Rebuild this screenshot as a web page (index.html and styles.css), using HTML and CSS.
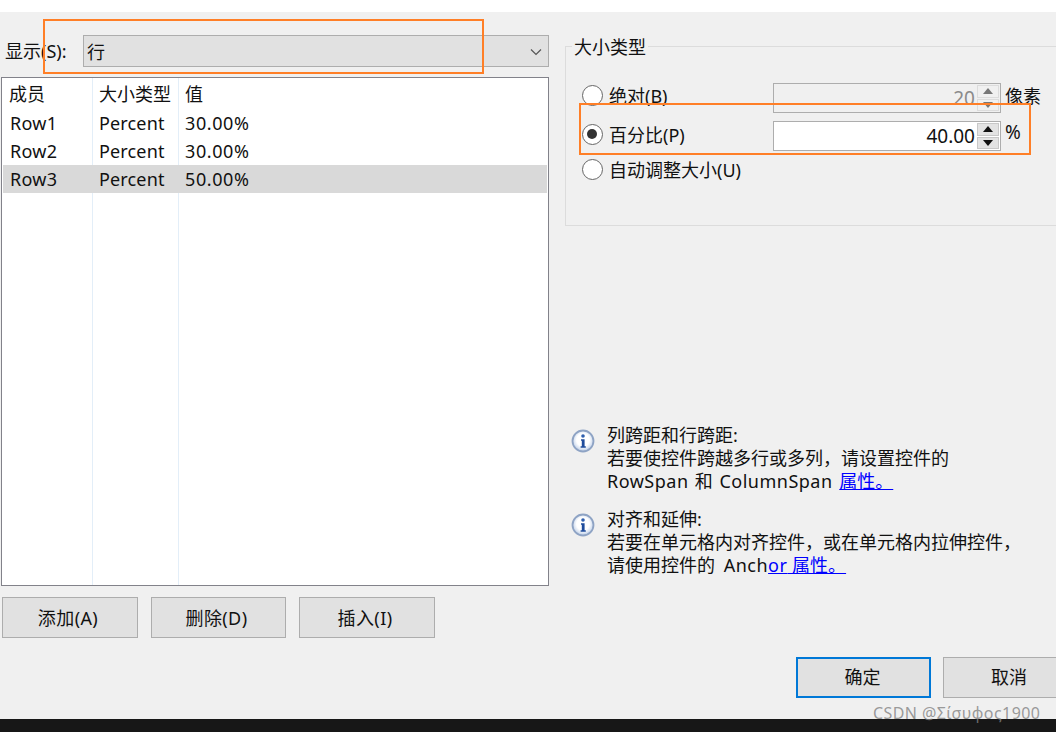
FILE: index.html
```html
<!DOCTYPE html>
<html lang="zh-CN">
<head>
<meta charset="utf-8">
<title>行和列样式</title>
<link rel="stylesheet" href="styles.css">
</head>
<body>
<div class="screen">
  <div class="top-strip"></div>
  <div class="dialog">
    <div class="left">
      <div class="show-row">
        <span class="show-label">显示(S):</span>
        <div class="combo">
          <span>行</span>
          <svg class="chevron" width="12" height="8" viewBox="0 0 12 8"><path d="M1 1.5 6 6.5 11 1.5" fill="none" stroke="#555" stroke-width="1.2"/></svg>
        </div>
      </div>
      <div class="list">
        <div class="list-row list-head"><span class="c1">成员</span><span class="c2">大小类型</span><span class="c3">值</span></div>
        <div class="list-row latin"><span class="c1">Row1</span><span class="c2">Percent</span><span class="c3">30.00%</span></div>
        <div class="list-row latin"><span class="c1">Row2</span><span class="c2">Percent</span><span class="c3">30.00%</span></div>
        <div class="list-row latin selected"><span class="c1">Row3</span><span class="c2">Percent</span><span class="c3">50.00%</span></div>
        <div class="list-fill"><span class="c1"></span><span class="c2"></span><span class="c3"></span></div>
      </div>
      <div class="actions">
        <button class="btn btn-add">添加(A)</button>
        <button class="btn btn-del">删除(D)</button>
        <button class="btn btn-ins">插入(I)</button>
      </div>
    </div>
    <div class="right">
      <fieldset class="group">
        <legend>大小类型</legend>
        <div class="opt opt-first">
          <span class="radio"></span><span class="opt-label">绝对(B)</span>
          <div class="spin disabled">
            <span class="spin-value">20</span>
            <span class="spin-btns"><span class="spin-btn"><i class="up"></i></span><span class="spin-btn"><i class="down"></i></span></span>
          </div>
          <span class="unit">像素</span>
        </div>
        <div class="opt">
          <span class="radio checked"></span><span class="opt-label">百分比(P)</span>
          <div class="spin">
            <span class="spin-value">40.00</span>
            <span class="spin-btns"><span class="spin-btn"><i class="up"></i></span><span class="spin-btn"><i class="down"></i></span></span>
          </div>
          <span class="unit unit-pct">%</span>
        </div>
        <div class="opt opt-last">
          <span class="radio"></span><span class="opt-label">自动调整大小(U)</span>
        </div>
      </fieldset>
      <div class="info info-first">
        <svg class="info-icon" width="24" height="24" viewBox="0 0 24 24"><defs><radialGradient id="ig" cx="50%" cy="45%" r="55%"><stop offset="55%" stop-color="#fff"/><stop offset="100%" stop-color="#b9cbe6"/></radialGradient></defs><circle cx="12" cy="12" r="10.5" fill="url(#ig)" stroke="#8ea3c4" stroke-width="1.8"/><circle cx="12" cy="7" r="1.8" fill="#2f5fae"/><path d="M10 10.2h3.6v7h1.2v1.6H9.6v-1.6h1.2v-5.4H10z" fill="#1f4c9c"/></svg>
        <p>列跨距和行跨距:<br>若要使控件跨越多行或多列，请设置控件的<br><span class="wide">RowSpan 和 ColumnSpan</span> <a class="link-gap" href="#">属性。</a></p>
      </div>
      <div class="info info-second">
        <svg class="info-icon" width="24" height="24" viewBox="0 0 24 24"><circle cx="12" cy="12" r="10.5" fill="url(#ig)" stroke="#8ea3c4" stroke-width="1.8"/><circle cx="12" cy="7" r="1.8" fill="#2f5fae"/><path d="M10 10.2h3.6v7h1.2v1.6H9.6v-1.6h1.2v-5.4H10z" fill="#1f4c9c"/></svg>
        <p>对齐和延伸:<br>若要在单元格内对齐控件，或在单元格内拉伸控件，<br>请使用控件的 <span class="wide anch">Anch</span><a href="#"><span class="wide">or</span> 属性。</a></p>
      </div>
      <div class="confirm">
        <button class="btn btn-ok">确定</button>
        <button class="btn btn-cancel">取消</button>
      </div>
    </div>
  </div>
  <div class="bottom-bar"></div>
  <div class="mark mark-combo"></div>
  <div class="mark mark-percent"></div>
  <div class="watermark">CSDN @Σίσυφος1900</div>
</div>
</body>
</html>
```
FILE: styles.css
```css
* { box-sizing: border-box; }
html, body { margin: 0; padding: 0; }
body { font-family: "Noto Sans", "Noto Sans CJK SC", sans-serif; font-size: 18px; color: #111; background: #fff; }
.screen { position: relative; width: 1056px; height: 732px; overflow: hidden; display: flex; flex-direction: column; }
.top-strip { height: 12px; background: #fff; flex: none; }
.dialog { flex: 1; background: #f0f0f0; display: flex; min-height: 0; }
.bottom-bar { height: 13px; background: #171717; flex: none; }

.left { width: 550px; flex: none; padding: 23px 0 0 1px; }
.show-row { display: flex; align-items: center; height: 32px; }
.show-label { width: 82px; padding-left: 4px; flex: none; line-height: 32px; }
.combo { width: 466px; height: 32px; background: #e1e1e1; border: 1px solid #adadad; display: flex; align-items: center; justify-content: space-between; padding: 0 6px 0 3px; }
.chevron { margin-top: 1px; }

.list { width: 548px; height: 509px; margin-top: 10px; background: #fff; border: 1px solid #82828a; padding: 0 1px; display: flex; flex-direction: column; }
.list-row { display: flex; height: 28px; line-height: 28px; flex: none; }
.list-head { height: 31px; line-height: 33px; }
.selected { background: #d9d9d9; }
.c1, .c2, .c3 { display: block; }
.c1 { width: 90px; padding-left: 6px; border-right: 1px solid #e3eef8; }
.c2 { width: 86px; padding-left: 6px; border-right: 1px solid #e3eef8; }
.c3 { padding-left: 6px; }
.latin .c1 { padding-left: 7px; letter-spacing: 0.3px; }
.latin .c2 { letter-spacing: 0.15px; }
.latin .c3 { letter-spacing: 0.6px; }
.selected .c1, .selected .c2 { border-right-color: #d9d9d9; }
.list-fill { flex: 1; display: flex; }

.actions { display: flex; margin: 11px 0 0 1px; }
.btn { font: inherit; color: #111; background: #e1e1e1; border: 1px solid #adadad; padding: 0 0 2px; height: 41px; flex: none; }
.actions .btn { letter-spacing: 0.4px; padding-right: 4px; }
.btn-add { width: 136px; margin-right: 13px; }
.btn-del { width: 135px; margin-right: 13px; }
.btn-ins { width: 136px; }

.right { flex: none; width: 510px; margin-left: 15px; display: flex; flex-direction: column; }
.group { margin: 23px 0 0; padding: 0 0 0 16px; height: 191px; border: 1px solid #dcdcdc; }
.group legend { margin-left: -10px; padding: 2px 2px 0; line-height: 20px; font-size: 18px; }
.opt { display: flex; align-items: center; height: 30px; margin-top: 8px; }
.opt-first { margin-top: 24px; }
.opt-first .radio, .opt-first .opt-label { margin-top: -2px; }
.opt-last { margin-top: 5px; }
.radio { position: relative; width: 21px; height: 21px; border: 1.5px solid #666; border-radius: 50%; background: #fff; flex: none; }
.radio.checked::after { content: ""; position: absolute; left: 4px; top: 4px; width: 10px; height: 10px; border-radius: 50%; background: #333; }
.opt-label { margin-left: 6px; width: 164px; flex: none; white-space: nowrap; }
.spin { width: 228px; height: 30px; margin-top: 4px; background: #fff; border: 1px solid #adadad; display: flex; flex: none; padding: 1px; font-size: 19px; }
.spin.disabled { background: #f0f0f0; color: #8a8a8a; }
.spin-value { flex: 1; text-align: right; padding-right: 2px; line-height: 27px; }
.spin-btns { width: 22px; display: flex; flex-direction: column; gap: 1px; }
.spin-btn { flex: 1; background: #e3e3e3; border: 1px solid #c8c8c8; display: flex; align-items: center; justify-content: center; }
.up { border: 5px solid transparent; border-top: 0; border-bottom: 6px solid #111; }
.down { border: 5px solid transparent; border-bottom: 0; border-top: 6px solid #111; }
.disabled .spin-btn { background: #f0f0f0; border-color: #dcdcdc; }
.disabled .up { border-bottom-color: #777; }
.disabled .down { border-top-color: #777; }
.unit { margin-left: 4px; white-space: nowrap; line-height: 24px; }
.unit-pct { margin-top: -5px; font-size: 19px; }

.info { display: flex; }
.info-first { margin-top: 198px; }
.info-second { margin-top: 15px; }
.info-icon { flex: none; margin: 5px 0 0 6px; }
.info p { margin: 0 0 0 12px; line-height: 23px; white-space: nowrap; }
.wide { letter-spacing: 0.5px; word-spacing: 1px; }
.anch { margin-left: 4px; }
.link-gap { margin-left: 2px; }
a { color: #0000ff; text-decoration: underline; }

.confirm { display: flex; margin: 80px 0 0 231px; }
.confirm .btn { padding-bottom: 4px; }
.btn-ok { width: 135px; margin-right: 12px; border: 2px solid #0078d7; padding-right: 2px; }
.btn-cancel { width: 132px; }

.mark { position: absolute; border: 2px solid #ff7f27; }
.mark-combo { left: 43px; top: 19px; width: 441px; height: 55px; }
.mark-percent { left: 579px; top: 103px; width: 452px; height: 52px; }
.watermark { position: absolute; left: 873px; top: 703px; font-size: 16px; line-height: 20px; color: rgba(130, 130, 130, 0.8); letter-spacing: 0.4px; white-space: nowrap; }
```
